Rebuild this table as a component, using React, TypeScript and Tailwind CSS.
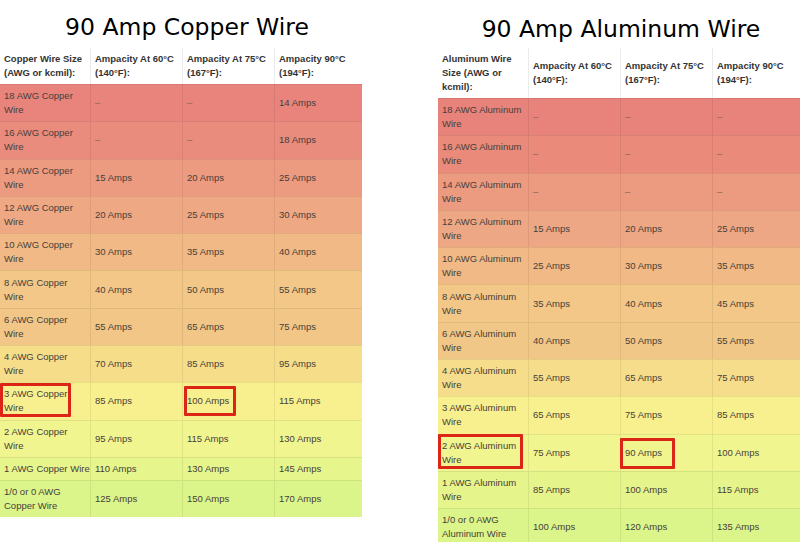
import React from "react";

type Row = {
  label: string[];
  values: string[];
  bg: string;
  boxLabel?: string;
  boxValue?: string;
};

const COPPER: Row[] = [
  { label: ["18 AWG Copper", "Wire"], values: ["–", "–", "14 Amps"], bg: "bg-[#e8847c]" },
  { label: ["16 AWG Copper", "Wire"], values: ["–", "–", "18 Amps"], bg: "bg-[#e98b7d]" },
  { label: ["14 AWG Copper", "Wire"], values: ["15 Amps", "20 Amps", "25 Amps"], bg: "bg-[#ec9b81]" },
  { label: ["12 AWG Copper", "Wire"], values: ["20 Amps", "25 Amps", "30 Amps"], bg: "bg-[#eea884]" },
  { label: ["10 AWG Copper", "Wire"], values: ["30 Amps", "35 Amps", "40 Amps"], bg: "bg-[#f0b985]" },
  { label: ["8 AWG Copper", "Wire"], values: ["40 Amps", "50 Amps", "55 Amps"], bg: "bg-[#f2c787]" },
  { label: ["6 AWG Copper", "Wire"], values: ["55 Amps", "65 Amps", "75 Amps"], bg: "bg-[#f1c686]" },
  { label: ["4 AWG Copper", "Wire"], values: ["70 Amps", "85 Amps", "95 Amps"], bg: "bg-[#f5dd8a]" },
  {
    label: ["3 AWG Copper", "Wire"],
    values: ["85 Amps", "100 Amps", "115 Amps"],
    bg: "bg-[#f8f08e]",
    boxLabel: "left-0 top-0 w-[71px] h-[34px]",
    boxValue: "left-[1px] top-[3px] w-[52px] h-[30px]",
  },
  { label: ["2 AWG Copper", "Wire"], values: ["95 Amps", "115 Amps", "130 Amps"], bg: "bg-[#f1f58f]" },
  { label: ["1 AWG Copper Wire"], values: ["110 Amps", "130 Amps", "145 Amps"], bg: "bg-[#e6f58c]" },
  { label: ["1/0 or 0 AWG", "Copper Wire"], values: ["125 Amps", "150 Amps", "170 Amps"], bg: "bg-[#dcf58a]" },
];

const ALUMINUM: Row[] = [
  { label: ["18 AWG Aluminum", "Wire"], values: ["–", "–", "–"], bg: "bg-[#e8837c]" },
  { label: ["16 AWG Aluminum", "Wire"], values: ["–", "–", "–"], bg: "bg-[#e98a7b]" },
  { label: ["14 AWG Aluminum", "Wire"], values: ["–", "–", "–"], bg: "bg-[#ec9a80]" },
  { label: ["12 AWG Aluminum", "Wire"], values: ["15 Amps", "20 Amps", "25 Amps"], bg: "bg-[#eda784]" },
  { label: ["10 AWG Aluminum", "Wire"], values: ["25 Amps", "30 Amps", "35 Amps"], bg: "bg-[#f0b985]" },
  { label: ["8 AWG Aluminum", "Wire"], values: ["35 Amps", "40 Amps", "45 Amps"], bg: "bg-[#f2c787]" },
  { label: ["6 AWG Aluminum", "Wire"], values: ["40 Amps", "50 Amps", "55 Amps"], bg: "bg-[#f1c787]" },
  { label: ["4 AWG Aluminum", "Wire"], values: ["55 Amps", "65 Amps", "75 Amps"], bg: "bg-[#f5dd8b]" },
  { label: ["3 AWG Aluminum", "Wire"], values: ["65 Amps", "75 Amps", "85 Amps"], bg: "bg-[#f8f08e]" },
  {
    label: ["2 AWG Aluminum", "Wire"],
    values: ["75 Amps", "90 Amps", "100 Amps"],
    bg: "bg-[#f1f58f]",
    boxLabel: "left-0 top-[-1px] w-[85px] h-[35px]",
    boxValue: "left-[-1px] top-[3px] w-[55px] h-[31px]",
  },
  { label: ["1 AWG Aluminum", "Wire"], values: ["85 Amps", "100 Amps", "115 Amps"], bg: "bg-[#e6f48c]" },
  { label: ["1/0 or 0 AWG", "Aluminum Wire"], values: ["100 Amps", "120 Amps", "135 Amps"], bg: "bg-[#dcf58a]" },
];

const HEAD_TEMPS = [
  ["Ampacity At 60°C", "(140°F):"],
  ["Ampacity At 75°C", "(167°F):"],
  ["Ampacity 90°C", "(194°F):"],
];

function Lines({ lines }: { lines: string[] }) {
  return (
    <>
      {lines.map((l, i) => (
        <span key={i} className="block whitespace-nowrap">
          {l}
        </span>
      ))}
    </>
  );
}

function WireTable({
  title,
  sizeHead,
  rows,
  titleClass,
}: {
  title: string;
  sizeHead: string[];
  rows: Row[];
  titleClass: string;
}) {
  return (
    <div className="flex flex-col w-[362px] shrink-0">
      <h2
        className={`text-center text-[23.5px] leading-[29px] text-black font-normal font-['DejaVu_Sans',sans-serif] h-[48px] ${titleClass}`}
      >
        {title}
      </h2>
      <table className="table-fixed border-separate border-spacing-0 w-[362px] font-['Liberation_Sans',Arial,sans-serif] text-[9.5px] leading-[14px]">
        <colgroup>
          <col className="w-[91px]" />
          <col className="w-[92px]" />
          <col className="w-[92px]" />
          <col className="w-[87px]" />
        </colgroup>
        <thead>
          <tr>
            <th className="bg-white px-1 py-1 text-left align-middle font-bold text-[#333] border-r border-[#ebebeb]">
              <Lines lines={sizeHead} />
            </th>
            {HEAD_TEMPS.map((h, i) => (
              <th
                key={i}
                className={`bg-white px-1 py-1 text-left align-middle font-bold text-[#333] ${i < 2 ? "border-r border-[#ebebeb]" : ""}`}
              >
                <Lines lines={h} />
              </th>
            ))}
          </tr>
        </thead>
        <tbody>
          {rows.map((r) => (
            <tr key={r.label.join(" ")}>
              <td className={`${r.bg} relative px-1 py-[4.15px] align-middle text-[#463f3a] border-t border-r border-black/[0.07]`}>
                <Lines lines={r.label} />
                {r.boxLabel && (
                  <span className={`absolute ${r.boxLabel} border-[3px] border-[#dc2417] rounded-[1px]`} />
                )}
              </td>
              {r.values.map((v, i) => (
                <td
                  key={i}
                  className={`${r.bg} relative px-1 py-[4.15px] align-middle whitespace-nowrap border-t border-black/[0.07] ${v === "–" ? "text-[#85655b]" : "text-[#463f3a]"} ${i < 2 ? "border-r" : ""}`}
                >
                  {v}
                  {i === 1 && r.boxValue && (
                    <span className={`absolute ${r.boxValue} border-[3px] border-[#dc2417] rounded-[1px]`} />
                  )}
                </td>
              ))}
            </tr>
          ))}
        </tbody>
      </table>
    </div>
  );
}

export default function App() {
  return (
    <div className="w-[800px] h-[542px] overflow-hidden bg-white flex items-start">
      <div className="w-[438px] shrink-0">
        <WireTable
          title="90 Amp Copper Wire"
          sizeHead={["Copper Wire Size", "(AWG or kcmil):"]}
          rows={COPPER}
          titleClass="pt-[13px] pl-[14px] pr-[2px]"
        />
      </div>
      <WireTable
        title="90 Amp Aluminum Wire"
        sizeHead={["Aluminum Wire", "Size (AWG or", "kcmil):"]}
        rows={ALUMINUM}
        titleClass="pt-[15px] pl-[4px]"
      />
    </div>
  );
}
